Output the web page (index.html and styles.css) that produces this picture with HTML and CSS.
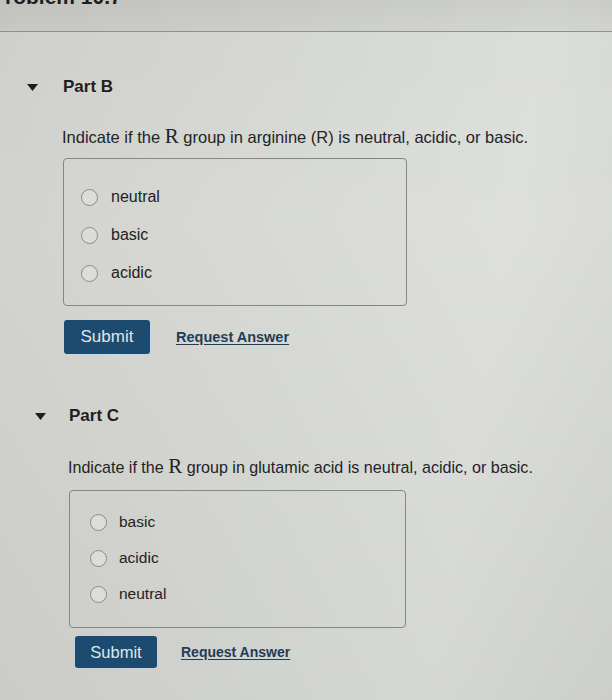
FILE: index.html
```html
<!DOCTYPE html>
<html lang="en">
<head>
<meta charset="utf-8">
<title>Problem 10.7</title>
<link rel="stylesheet" href="styles.css">
</head>
<body>
<div class="screen">
  <header class="page-head">
    <h1 class="page-title">Problem 10.7</h1>
  </header>

  <section class="part part--b">
    <div class="part-head">
      <svg class="caret" viewBox="0 0 11 7" width="11" height="7"><polygon points="0,0 11,0 5.5,7"/></svg>
      <h2 class="part-title">Part B</h2>
    </div>
    <p class="prompt">Indicate if the <span class="math">R</span> group in arginine (R) is neutral, acidic, or basic.</p>
    <div class="choices">
      <label class="choice"><span class="radio"></span><span class="choice-text">neutral</span></label>
      <label class="choice"><span class="radio"></span><span class="choice-text">basic</span></label>
      <label class="choice"><span class="radio"></span><span class="choice-text">acidic</span></label>
    </div>
    <div class="actions">
      <button class="submit" type="button">Submit</button>
      <a class="request" href="#">Request Answer</a>
    </div>
  </section>

  <section class="part part--c">
    <div class="part-head">
      <svg class="caret" viewBox="0 0 11 7" width="11" height="7"><polygon points="0,0 11,0 5.5,7"/></svg>
      <h2 class="part-title">Part C</h2>
    </div>
    <p class="prompt">Indicate if the <span class="math">R</span> group in glutamic acid is neutral, acidic, or basic.</p>
    <div class="choices">
      <label class="choice"><span class="radio"></span><span class="choice-text">basic</span></label>
      <label class="choice"><span class="radio"></span><span class="choice-text">acidic</span></label>
      <label class="choice"><span class="radio"></span><span class="choice-text">neutral</span></label>
    </div>
    <div class="actions">
      <button class="submit" type="button">Submit</button>
      <a class="request" href="#">Request Answer</a>
    </div>
  </section>
</div>
</body>
</html>
```

FILE: styles.css
```css
* { box-sizing: border-box; }

html, body {
  margin: 0;
  height: 100%;
}

body {
  font-family: "Liberation Sans", Arial, sans-serif;
  color: #242424;
  background: linear-gradient(100deg, #cfd0cc 0%, #d6d8d4 45%, #dcdedb 75%, #d3d5d1 100%);
  overflow: hidden;
}

.screen {
  height: 700px;
  background: linear-gradient(180deg, rgba(0,0,0,0.07) 0px, rgba(0,0,0,0.04) 31px, rgba(255,255,255,0) 33px, rgba(255,255,255,0.05) 220px, rgba(0,0,0,0.03) 700px);
}

/* page header, scrolled mostly out of view */
.page-head {
  height: 32px;
  border-bottom: 1px solid #8e908c;
  overflow: hidden;
}

.page-title {
  margin: -14px 0 0 -9px;
  font-size: 21px;
  line-height: 21px;
  font-weight: 700;
  color: #1d1d1d;
}

/* collapsible part */
.part-head {
  display: flex;
  align-items: center;
  height: 20px;
}

.caret { fill: #1e1e1e; flex: none; }

.part-title {
  margin: 0;
  font-size: 17px;
  font-weight: 700;
  line-height: 20px;
  color: #1f1f1f;
}

.prompt {
  margin: 0;
  height: 20px;
  font-size: 16.4px;
  line-height: 20px;
  white-space: nowrap;
}

.math {
  font-family: "Liberation Serif", "Times New Roman", serif;
  font-size: 21px;
  line-height: 0;
}

.choices {
  border: 1.5px solid #858783;
  border-radius: 4px;
  display: flex;
  flex-direction: column;
}

.choice {
  display: flex;
  align-items: center;
  font-size: 16px;
  color: #222;
}

.radio {
  flex: none;
  width: 17px;
  height: 17px;
  border-radius: 50%;
  border: 1.5px solid #8b8c89;
  background: #dcddd9;
}

.actions {
  display: flex;
  align-items: center;
}

.submit {
  border: none;
  border-radius: 3px;
  background: #1b4b71;
  color: #dfe6ea;
  font-family: inherit;
  font-size: 17px;
  padding: 0;
}

.request {
  font-size: 14.5px;
  font-weight: 700;
  color: #1f3d57;
  text-decoration: underline;
  text-underline-offset: 2px;
}

/* Part B */
.part--b { padding-top: 45px; }
.part--b .part-head { padding-left: 27px; gap: 25px; }
.part--b .prompt { margin: 30px 0 0 62px; font-size: 16.5px; }
.part--b .choices { margin: 11px 0 0 63px; width: 344px; height: 148px; padding: 19px 0 0 17px; }
.part--b .choice { height: 38px; gap: 13px; }
.part--b .actions { margin: 14px 0 0 64px; gap: 26px; }
.part--b .submit { width: 86px; height: 34px; }

/* Part C */
.part--c { padding-top: 52px; }
.part--c .part-head { padding-left: 35px; gap: 23px; }
.part--c .prompt { margin: 31px 0 0 68px; font-size: 16.1px; }
.part--c .choices { margin: 13px 0 0 69px; width: 337px; height: 138px; padding: 13px 0 0 20px; }
.part--c .choice { height: 36px; gap: 12px; font-size: 15.5px; }
.part--c .actions { margin: 8px 0 0 75px; gap: 24px; }
.part--c .submit { width: 82px; height: 32px; font-size: 16.5px; }
.part--c .request { font-size: 14px; }
```
